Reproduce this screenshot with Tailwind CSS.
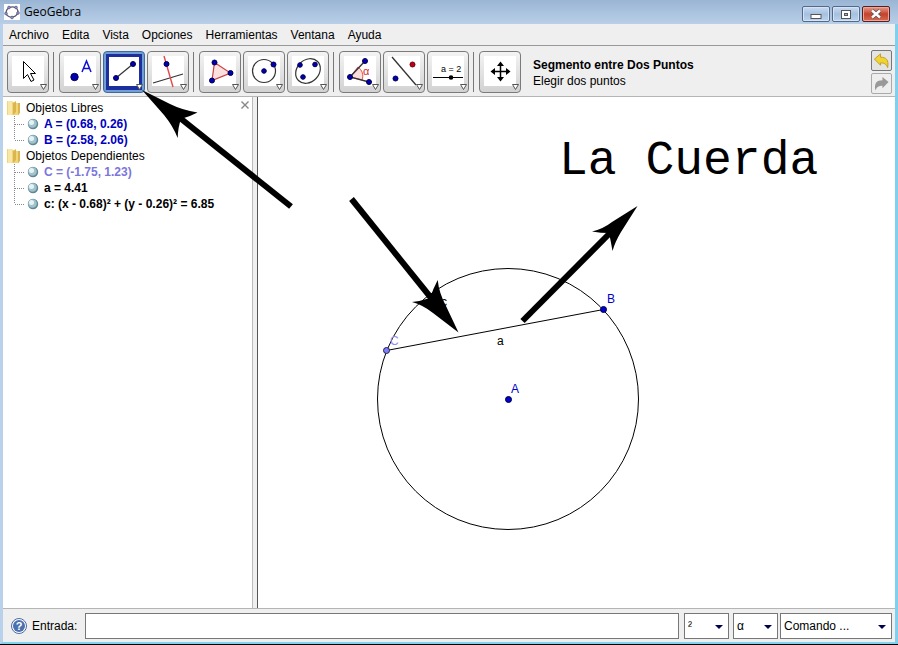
<!DOCTYPE html>
<html lang="es">
<head>
<meta charset="utf-8">
<title>GeoGebra</title>
<script src="https://cdn.jsdelivr.net/npm/@tailwindcss/browser@4"></script>
</head>
<body class="font-['Liberation_Sans',Arial,sans-serif] text-xs text-black">
<div class="relative flex flex-col min-h-screen bg-[#efefef] border-b border-black overflow-hidden">
  <header class="flex items-center h-6 shrink-0 bg-linear-to-b from-[#9ab5d4] to-[#b9cfe8] pl-1 pr-2">
    <svg class="size-4 shrink-0 bg-white" viewBox="0 0 16 16"><ellipse cx="8" cy="8" rx="6" ry="5" fill="none" stroke="#555566" stroke-width="1.300" transform="rotate(-15 8 8)"/><g fill="#8f8fd0" stroke="#444466" stroke-width=".5"><circle cx="5" cy="3.500" r="1.400"/><circle cx="12" cy="3.500" r="1.400"/><circle cx="14" cy="9" r="1.400"/><circle cx="8" cy="13.500" r="1.400"/><circle cx="2" cy="9.500" r="1.400"/></g></svg>
    <h1 class="ml-1 font-['Open_Sans',sans-serif] text-xs grow">GeoGebra</h1>
    <div class="flex gap-0.5 pt-1">
      <button aria-label="Minimizar" class="w-7 h-4 flex items-center justify-center rounded-xs border border-[#52698a] bg-linear-to-b from-[#c9dcf1] via-[#a5c0df] to-[#b9d3ee] shadow-[inset_0_0_0_1px_#d5e4f5]"><svg class="size-3" viewBox="0 0 12 12"><rect x="1" y="6.500" width="10" height="4" fill="#fff" stroke="#555"/></svg></button>
      <button aria-label="Maximizar" class="w-7 h-4 flex items-center justify-center rounded-xs border border-[#52698a] bg-linear-to-b from-[#c9dcf1] via-[#a5c0df] to-[#b9d3ee] shadow-[inset_0_0_0_1px_#d5e4f5]"><svg class="size-3" viewBox="0 0 12 12"><rect x="1.500" y="2.500" width="9" height="8" fill="#fff" stroke="#555"/><rect x="4.500" y="5.500" width="3" height="2" fill="#9bb6d6" stroke="#555"/></svg></button>
      <button aria-label="Cerrar" class="w-7 h-4 flex items-center justify-center rounded-xs border border-[#5c1d1d] bg-linear-to-b from-[#e29b8d] via-[#c6402b] to-[#d46a50] shadow-[inset_0_0_0_1px_#e8a99c]"><svg class="size-3" viewBox="0 0 12 12"><path d="M2 2.500l8 7M10 2.500l-8 7" stroke="#555" stroke-width="4"/><path d="M2 2.500l8 7M10 2.500l-8 7" stroke="#fff" stroke-width="2.400"/></svg></button>
    </div>
  </header>
  <div class="flex flex-col grow border-l-3 border-l-[#b9d1ea] border-r-3 border-r-[#7fd0ee] border-b-2 border-b-[#7fd3ec]">
    <nav class="flex items-center gap-[13px] h-[22px] shrink-0 pl-1.5 border-b border-[#999]">
      <button>Archivo</button><button>Edita</button><button>Vista</button><button>Opciones</button><button>Herramientas</button><button>Ventana</button><button>Ayuda</button>
    </nav>
    <div class="flex items-center h-[51px] shrink-0 border-b border-[#b5b5b5] pl-1 pr-[3px] pt-0.5">
      <div class="flex items-center gap-0.5">
        <button aria-label="Elige y mueve" class="size-[42px] rounded-sm border border-[#7b7b7b] bg-linear-to-b from-[#f4f4f4] to-[#d2d2d2] p-px"><svg viewBox="0 0 38 38"><path fill="#fff" d="M3 3h32v30H3z"/><path d="M14.500 8.500v17l4-4 3.500 7 3-1.500-3.500-6.500h5z" fill="#fff" stroke="#000"/><path d="M31.500 31.500h6l-3 5z" fill="#fff" stroke="#555"/></svg></button>
        <div class="w-0.5 h-10 mx-0.5 border-l border-[#777]"></div>
        <button aria-label="Nuevo punto" class="size-[42px] rounded-sm border border-[#7b7b7b] bg-linear-to-b from-[#f4f4f4] to-[#d2d2d2] p-px"><svg viewBox="0 0 38 38"><path fill="#fff" d="M3 3h32v30H3z"/><circle cx="13.500" cy="24" r="3.700" fill="#0000b0" stroke="#000050"/><path d="M21 19l4.500-11 4.500 11M22.500 15.500h6" fill="none" stroke="#1010d0" stroke-width="1.500"/><path d="M31.500 31.500h6l-3 5z" fill="#fff" stroke="#555"/></svg></button>
        <button aria-label="Segmento entre dos puntos" class="size-[42px] rounded-sm border border-[#3f6a9c] bg-[#6f9fd4] p-px"><svg viewBox="0 0 38 38"><path fill="#1c2f9c" d="M1 1h36v36H1z"/><path fill="#fff" d="M4 4h30v29H4z"/><path d="M11 25L28 11" stroke="#333" stroke-width="1.200"/><g fill="#0000b0" stroke="#000050"><circle cx="11" cy="25" r="2.500"/><circle cx="28" cy="11" r="2.500"/></g><path d="M31.500 31.500h6l-3 5z" fill="#fff" stroke="#555"/></svg></button>
        <button aria-label="Recta perpendicular" class="size-[42px] rounded-sm border border-[#7b7b7b] bg-linear-to-b from-[#f4f4f4] to-[#d2d2d2] p-px"><svg viewBox="0 0 38 38"><path fill="#fff" d="M3 3h32v30H3z"/><path d="M4 30L34 21" stroke="#333" stroke-width="1.200"/><path d="M15 3l9 31" stroke="#e54848" stroke-width="1.400"/><circle cx="17.500" cy="11" r="2.500" fill="#0000b0" stroke="#000050"/><path d="M31.500 31.500h6l-3 5z" fill="#fff" stroke="#555"/></svg></button>
        <div class="w-0.5 h-10 mx-0.5 border-l border-[#777]"></div>
        <button aria-label="Polígono" class="size-[42px] rounded-sm border border-[#7b7b7b] bg-linear-to-b from-[#f4f4f4] to-[#d2d2d2] p-px"><svg viewBox="0 0 38 38"><path fill="#fff" d="M3 3h32v30H3z"/><path d="M13.500 9.500L29.500 20 11 27.500z" fill="#fbe0e0" stroke="#cc4040" stroke-width="1.200"/><g fill="#0000b0" stroke="#000050"><circle cx="13.500" cy="9.500" r="2.500"/><circle cx="29.500" cy="20" r="2.500"/><circle cx="11" cy="27.500" r="2.500"/></g><path d="M31.500 31.500h6l-3 5z" fill="#fff" stroke="#555"/></svg></button>
        <button aria-label="Circunferencia" class="size-[42px] rounded-sm border border-[#7b7b7b] bg-linear-to-b from-[#f4f4f4] to-[#d2d2d2] p-px"><svg viewBox="0 0 38 38"><path fill="#fff" d="M3 3h32v30H3z"/><circle cx="19" cy="18" r="11.500" fill="none" stroke="#333" stroke-width="1.200"/><g fill="#0000b0" stroke="#000050"><circle cx="19" cy="18" r="2.300"/><circle cx="28.500" cy="11.500" r="2.500"/></g><path d="M31.500 31.500h6l-3 5z" fill="#fff" stroke="#555"/></svg></button>
        <button aria-label="Elipse" class="size-[42px] rounded-sm border border-[#7b7b7b] bg-linear-to-b from-[#f4f4f4] to-[#d2d2d2] p-px"><svg viewBox="0 0 38 38"><path fill="#fff" d="M3 3h32v30H3z"/><ellipse cx="19" cy="18" rx="13.500" ry="11" transform="rotate(-45 19 18)" fill="none" stroke="#333" stroke-width="1.200"/><g fill="#0000b0" stroke="#000050"><circle cx="11" cy="12" r="2.300"/><circle cx="26" cy="11.500" r="2.300"/><circle cx="14" cy="24" r="2.300"/></g><path d="M31.500 31.500h6l-3 5z" fill="#fff" stroke="#555"/></svg></button>
        <div class="w-0.5 h-10 mx-0.5 border-l border-[#777]"></div>
        <button aria-label="Ángulo" class="size-[42px] rounded-sm border border-[#7b7b7b] bg-linear-to-b from-[#f4f4f4] to-[#d2d2d2] p-px"><svg viewBox="0 0 38 38"><path fill="#fff" d="M3 3h32v30H3z"/><path d="M9 24l8-10c4 3 6 8 4 13z" fill="#fbdede" stroke="#e05050"/><path d="M24 8L9 24l19 5" fill="none" stroke="#333" stroke-width="1.300"/><g fill="#0000b0" stroke="#000050"><circle cx="24" cy="8" r="2.500"/><circle cx="9" cy="24" r="2.500"/><circle cx="28" cy="29" r="2.500"/></g><text x="22" y="22" font-size="11" fill="#d03030">α</text><path d="M31.500 31.500h6l-3 5z" fill="#fff" stroke="#555"/></svg></button>
        <button aria-label="Simetría axial" class="size-[42px] rounded-sm border border-[#7b7b7b] bg-linear-to-b from-[#f4f4f4] to-[#d2d2d2] p-px"><svg viewBox="0 0 38 38"><path fill="#fff" d="M3 3h32v30H3z"/><path d="M7 4l24 28" stroke="#333" stroke-width="1.300"/><circle cx="10.500" cy="25.500" r="2.500" fill="#0000b0" stroke="#000050"/><circle cx="27.500" cy="11.500" r="2.500" fill="#c00010" stroke="#700010"/><path d="M31.500 31.500h6l-3 5z" fill="#fff" stroke="#555"/></svg></button>
        <button aria-label="Deslizador" class="size-[42px] rounded-sm border border-[#7b7b7b] bg-linear-to-b from-[#f4f4f4] to-[#d2d2d2] p-px"><svg viewBox="0 0 38 38"><path fill="#fff" d="M3 3h32v30H3z"/><text x="12" y="19" font-size="9">a = 2</text><path d="M4 24.500h30" stroke="#000"/><circle cx="22" cy="24.500" r="2.300"/><path d="M31.500 31.500h6l-3 5z" fill="#fff" stroke="#555"/></svg></button>
        <div class="w-0.5 h-10 mx-0.5 border-l border-[#777]"></div>
        <button aria-label="Desplaza vista gráfica" class="size-[42px] rounded-sm border border-[#7b7b7b] bg-linear-to-b from-[#f4f4f4] to-[#d2d2d2] p-px"><svg viewBox="0 0 38 38"><path fill="#fff" d="M3 3h32v30H3z"/><path d="M19.500 11v16M12 18.500h15" stroke="#000" stroke-width="1.500"/><path d="M19.500 8.500l3.500 4.500h-7zM19.500 28.500l3.500-4.500h-7zM9.500 18.500l4.500-3.500v7zM29.500 18.500l-4.500-3.500v7z"/><path d="M31.500 31.500h6l-3 5z" fill="#fff" stroke="#555"/></svg></button>
      </div>
      <div class="grow ml-3 leading-4 pt-0.5"><p class="font-bold">Segmento entre Dos Puntos</p><p>Elegir dos puntos</p></div>
      <div class="flex flex-col gap-0.5">
        <button aria-label="Deshacer" class="size-[21px] rounded-xs border border-[#777] bg-[#e4e4e4] p-px"><svg viewBox="0 0 18 18"><path d="M1.500 7.500L8 2v3.500c6 0 9 3 7.500 11-1.500-4-4-5-7.500-5V14z" fill="#f2d430" stroke="#b8941c" stroke-width=".9"/></svg></button>
        <button aria-label="Rehacer" class="size-[21px] rounded-xs border border-[#aaa] bg-[#eee] p-px"><svg viewBox="0 0 18 18"><path d="M16.500 7.500L10 2v3.500C4 5.500 1 8.500 2.500 16.500c1.500-4 4-5 7.500-5V14z" fill="#999"/></svg></button>
      </div>
    </div>
    <main class="flex grow">
      <aside class="relative w-[250px] shrink-0 bg-white border-r border-[#bbb] pt-[3px] pl-1">
        <button aria-label="Cerrar vista algebraica" class="absolute right-px top-0.5 size-3"><svg viewBox="0 0 12 12"><path d="M2.500 2.500l7 7M9.500 2.500l-7 7" stroke="#888" stroke-width="1.400"/></svg></button>
        <ul class="leading-4">
          <li>
            <div class="flex items-center gap-[5px]"><svg class="w-3.5 h-4" viewBox="0 0 14 16"><path d="M0 1h5l2 2h5v12H0z" fill="#f1d579"/><path d="M1 1h4v14H1z" fill="#f8e8a8"/><path d="M6 3l3-2v11l-3 3zM11 3h2v10l-2 2z" fill="#dcb54e"/></svg>Objetos Libres</div>
            <ul class="font-bold text-[#0000c0]">
              <li class="flex items-center"><svg class="w-4 h-4 ml-1" viewBox="0 0 16 16"><path d="M3.500 0v16M4 8.500h10" stroke="#888" stroke-dasharray="1 1"/></svg><svg class="size-3 mr-[5px]" viewBox="0 0 12 12"><circle cx="6" cy="6" r="5.200" fill="#5f8792"/><circle cx="5.500" cy="5.500" r="4.300" fill="#a3c3cc"/><circle cx="4.500" cy="4.500" r="2.500" fill="#e4f3f6"/></svg>A = (0.68, 0.26)</li>
              <li class="flex items-center"><svg class="w-4 h-4 ml-1" viewBox="0 0 16 16"><path d="M3.500 0v8M4 8.500h10" stroke="#888" stroke-dasharray="1 1"/></svg><svg class="size-3 mr-[5px]" viewBox="0 0 12 12"><circle cx="6" cy="6" r="5.200" fill="#5f8792"/><circle cx="5.500" cy="5.500" r="4.300" fill="#a3c3cc"/><circle cx="4.500" cy="4.500" r="2.500" fill="#e4f3f6"/></svg>B = (2.58, 2.06)</li>
            </ul>
          </li>
          <li>
            <div class="flex items-center gap-[5px]"><svg class="w-3.5 h-4" viewBox="0 0 14 16"><path d="M0 1h5l2 2h5v12H0z" fill="#f1d579"/><path d="M1 1h4v14H1z" fill="#f8e8a8"/><path d="M6 3l3-2v11l-3 3zM11 3h2v10l-2 2z" fill="#dcb54e"/></svg>Objetos Dependientes</div>
            <ul class="font-bold">
              <li class="flex items-center text-[#7b76dc]"><svg class="w-4 h-4 ml-1" viewBox="0 0 16 16"><path d="M3.500 0v16M4 8.500h10" stroke="#888" stroke-dasharray="1 1"/></svg><svg class="size-3 mr-[5px]" viewBox="0 0 12 12"><circle cx="6" cy="6" r="5.200" fill="#5f8792"/><circle cx="5.500" cy="5.500" r="4.300" fill="#a3c3cc"/><circle cx="4.500" cy="4.500" r="2.500" fill="#e4f3f6"/></svg>C = (-1.75, 1.23)</li>
              <li class="flex items-center"><svg class="w-4 h-4 ml-1" viewBox="0 0 16 16"><path d="M3.500 0v16M4 8.500h10" stroke="#888" stroke-dasharray="1 1"/></svg><svg class="size-3 mr-[5px]" viewBox="0 0 12 12"><circle cx="6" cy="6" r="5.200" fill="#5f8792"/><circle cx="5.500" cy="5.500" r="4.300" fill="#a3c3cc"/><circle cx="4.500" cy="4.500" r="2.500" fill="#e4f3f6"/></svg>a = 4.41</li>
              <li class="flex items-center"><svg class="w-4 h-4 ml-1" viewBox="0 0 16 16"><path d="M3.500 0v8M4 8.500h10" stroke="#888" stroke-dasharray="1 1"/></svg><svg class="size-3 mr-[5px]" viewBox="0 0 12 12"><circle cx="6" cy="6" r="5.200" fill="#5f8792"/><circle cx="5.500" cy="5.500" r="4.300" fill="#a3c3cc"/><circle cx="4.500" cy="4.500" r="2.500" fill="#e4f3f6"/></svg>c: (x - 0.68)² + (y - 0.26)² = 6.85</li>
            </ul>
          </li>
        </ul>
      </aside>
      <div class="w-[5px] shrink-0 border-r border-[#555]"></div>
      <section aria-label="Vista gráfica" class="relative grow bg-white overflow-hidden">
        <svg class="absolute left-0 top-0 size-full" font-size="12">
          <g transform="translate(-258 -97)">
            <circle cx="508" cy="399" r="130.500" fill="none" stroke="#000"/>
            <path d="M386.500 350.500L603.500 309.500" stroke="#000"/>
            <circle cx="508.500" cy="399.500" r="3" fill="#0000d0" stroke="#000040"/>
            <circle cx="603.500" cy="309.500" r="3" fill="#0000d0" stroke="#000040"/>
            <circle cx="386.500" cy="350.500" r="3" fill="#7d7dff" stroke="#222240"/>
            <text x="511" y="393" fill="#0000c8">A</text>
            <text x="607" y="303" fill="#0000c8">B</text>
            <text x="390" y="345" fill="#9090f0">C</text>
            <text x="497" y="345">a</text>
            <text x="441" y="306">c</text>
            <text x="559" y="174" font-size="48" font-family="'Liberation Mono','Courier New',monospace">La Cuerda</text>
          </g>
        </svg>
      </section>
    </main>
    <footer class="flex items-center h-[34px] shrink-0 border-t border-[#b5b5b5] pl-2 pr-[3px]">
      <button aria-label="Ayuda" class="size-4 mr-[5px]"><svg viewBox="0 0 16 16"><circle cx="8" cy="8" r="7.500" fill="#fff" stroke="#4a6aa5"/><circle cx="8" cy="8" r="6" fill="#4a70ae"/><text x="8" y="12" text-anchor="middle" font-size="11" font-weight="bold" fill="#fff">?</text></svg></button>
      <label for="entrada" class="w-[53px]">Entrada:</label>
      <input id="entrada" type="text" class="grow min-w-0 h-[26px] bg-white border border-[#777] px-1">
      <div class="relative ml-[5px] w-[45px] h-[26px]"><select aria-label="Exponente" class="appearance-none size-full bg-white border border-[#777] pl-[3px]"><option>²</option></select><svg class="absolute right-1.5 top-3 w-2 h-1 pointer-events-none" viewBox="0 0 8 4"><path d="M0 0h8L4 4z" fill="#000050"/></svg></div>
      <div class="relative ml-1 w-[45px] h-[26px]"><select aria-label="Letra griega" class="appearance-none size-full bg-white border border-[#777] pl-[3px]"><option>α</option></select><svg class="absolute right-1.5 top-3 w-2 h-1 pointer-events-none" viewBox="0 0 8 4"><path d="M0 0h8L4 4z" fill="#000050"/></svg></div>
      <div class="relative ml-0.5 w-28 h-[26px]"><select aria-label="Comando" class="appearance-none size-full bg-white border border-[#777] pl-[3px]"><option>Comando ...</option></select><svg class="absolute right-1.5 top-3 w-2 h-1 pointer-events-none" viewBox="0 0 8 4"><path d="M0 0h8L4 4z" fill="#000050"/></svg></div>
    </footer>
  </div>
  <svg class="absolute left-0 top-0 size-full pointer-events-none">
    <g stroke="#000" stroke-width="6">
      <path d="M291 206.500L175 114"/><path d="M351.500 199L436 304"/><path d="M522.500 321L613 230"/>
    </g>
    <path d="M142 90L170 104Q182 110 197.500 112.500Q189 117 181 119Q178 127 177.700 138Q173 126 164 115Z"/>
    <path d="M458.500 332.500L446 306Q439 293 437.700 280Q433 289 430 298Q421 301 412 302Q423 305 433 313Z"/>
    <path d="M637.500 206L612 222Q603 229 592 231.500Q601 233 609 233Q611 242 612.500 251Q615 242 621 232Z"/>
  </svg>
</div>
</body>
</html>
